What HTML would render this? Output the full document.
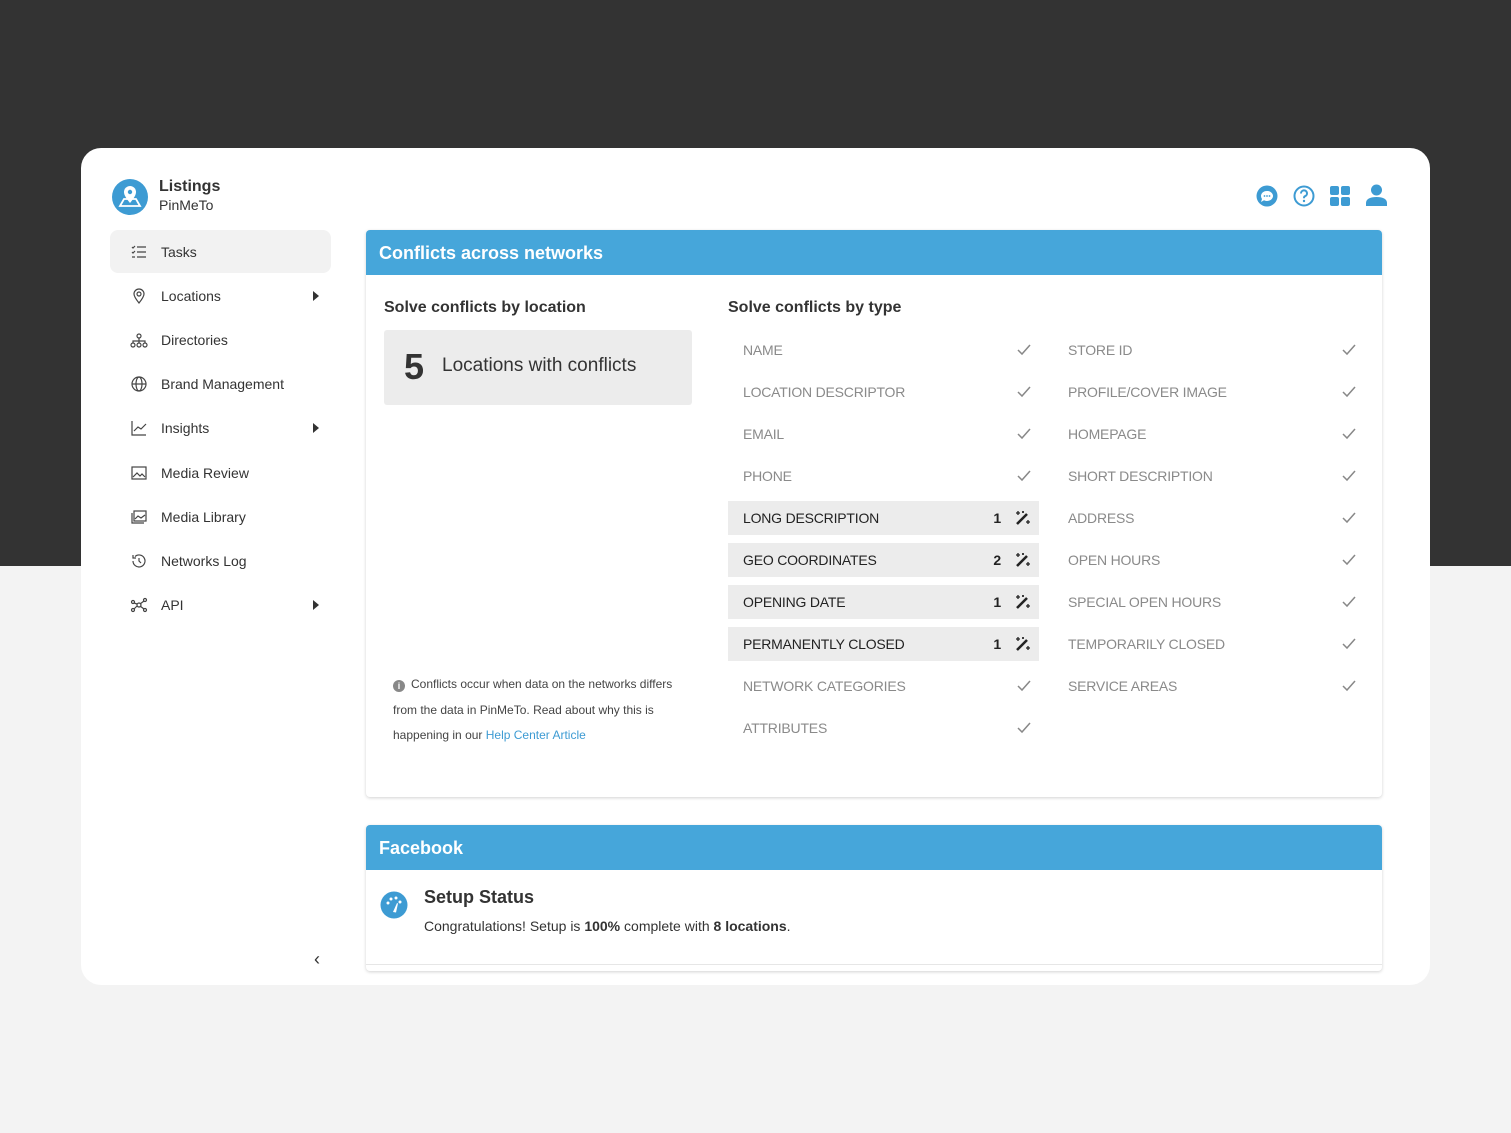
<!DOCTYPE html>
<html><head><meta charset="utf-8"><style>
*{box-sizing:border-box;margin:0;padding:0}
body{width:1511px;height:1133px;position:relative;background:#f3f3f3;font-family:"Liberation Sans",sans-serif;color:#333;overflow:hidden}
.top{position:absolute;left:0;top:0;width:1511px;height:566px;background:#333}
.card{position:absolute;left:81px;top:148px;width:1349px;height:837px;background:#fff;border-radius:20px;overflow:hidden}
.abs{position:absolute}
.nav{position:absolute;left:29px;width:221px;height:43px;border-radius:8px;font-size:14px;color:#333;display:flex;align-items:center}
.nav .ic{position:absolute;left:20px;top:13px;width:18px;height:18px}
.nav .t{position:absolute;left:51px}
.nav .ar{position:absolute;left:203px;top:17px;width:0;height:0;border-left:6px solid #333;border-top:5px solid transparent;border-bottom:5px solid transparent}
.panel{position:absolute;left:285px;width:1016px;background:#fff;box-shadow:0 1px 3px rgba(0,0,0,.18);border-radius:4px;overflow:hidden}
.ph{height:45px;background:#46a6da;color:#fff;font-weight:bold;font-size:18px;padding:13px 13px}
.row{position:absolute;height:34px;font-size:14px;letter-spacing:-0.2px;color:#8a8a8a;display:flex;align-items:center;padding-left:15px}
.row.c{background:#ececec;color:#222}
.chk{position:absolute;right:8px;top:10px}
.num{position:absolute;right:38px;font-weight:bold;color:#222}
</style></head><body>
<div class="top"></div>
<div class="card">
 <svg class="abs" style="left:30px;top:30px" width="38" height="38" viewBox="0 0 38 38"><circle cx="19" cy="19" r="18" fill="#3d9bd3"/><path d="M9 28 L13 21 H25 L29 28 Z" fill="none" stroke="#fff" stroke-width="1.8"/><path d="M19 25 C15 20 13 17 13 14 A6 6 0 0 1 25 14 C25 17 23 20 19 25Z" fill="#fff"/><circle cx="19" cy="14" r="2.2" fill="#3d9bd3"/></svg>
 <div class="abs" style="left:78px;top:30px;font-size:16px;font-weight:bold;color:#333">Listings</div>
 <div class="abs" style="left:78px;top:49px;font-size:14px;color:#333">PinMeTo</div>

 <div class="nav" style="top:82px;background:#f2f2f2"><svg class="ic" viewBox="0 0 18 18" fill="none" stroke="#444" stroke-width="1.2"><path d="M2 4l1 1 2-2M2 9l1 1 2-2M7 4h9M7 9h9M7 14h9M2 14h3"/></svg><span class="t">Tasks</span></div>
 <div class="nav" style="top:126px"><svg class="ic" viewBox="0 0 18 18" fill="none" stroke="#444" stroke-width="1.2"><path d="M9 16C5 11 4 9 4 7a5 5 0 0 1 10 0c0 2-1 4-5 9z"/><circle cx="9" cy="7" r="2"/></svg><span class="t">Locations</span><span class="ar"></span></div>
 <div class="nav" style="top:170px"><svg class="ic" viewBox="0 0 18 18" fill="none" stroke="#444" stroke-width="1.2"><circle cx="9" cy="5" r="2"/><circle cx="3" cy="14" r="2"/><circle cx="9" cy="14" r="2"/><circle cx="15" cy="14" r="2"/><path d="M9 7v5M3 12v-2h12v2"/></svg><span class="t">Directories</span></div>
 <div class="nav" style="top:214px"><svg class="ic" viewBox="0 0 18 18" fill="none" stroke="#444" stroke-width="1.2"><circle cx="9" cy="9" r="7"/><ellipse cx="9" cy="9" rx="3" ry="7"/><path d="M2 9h14"/></svg><span class="t">Brand Management</span></div>
 <div class="nav" style="top:258px"><svg class="ic" viewBox="0 0 18 18" fill="none" stroke="#444" stroke-width="1.2"><path d="M2 2v14h14M4 12l4-4 3 2 5-5"/></svg><span class="t">Insights</span><span class="ar"></span></div>
 <div class="nav" style="top:303px"><svg class="ic" viewBox="0 0 18 18" fill="none" stroke="#444" stroke-width="1.2"><rect x="2" y="3" width="14" height="12"/><path d="M3 13l4-4 3 3 2-2 3 3"/></svg><span class="t">Media Review</span></div>
 <div class="nav" style="top:347px"><svg class="ic" viewBox="0 0 18 18" fill="none" stroke="#444" stroke-width="1.2"><rect x="4" y="3" width="12" height="10"/><path d="M2 5v10h12M5 11l3-3 3 2 4-3"/></svg><span class="t">Media Library</span></div>
 <div class="nav" style="top:391px"><svg class="ic" viewBox="0 0 18 18" fill="none" stroke="#444" stroke-width="1.2"><path d="M3 9a6 6 0 1 0 2-4.5M3 3v3h3M9 6v3l2 2"/></svg><span class="t">Networks Log</span></div>
 <div class="nav" style="top:435px"><svg class="ic" viewBox="0 0 18 18" fill="none" stroke="#444" stroke-width="1.2"><circle cx="9" cy="9" r="2"/><circle cx="3" cy="6" r="1.5"/><circle cx="15" cy="4" r="1.5"/><circle cx="3" cy="14" r="1.5"/><circle cx="15" cy="14" r="1.5"/><path d="M4 7l3 1M14 5l-4 3M4 13l3-3M14 13l-4-3"/></svg><span class="t">API</span><span class="ar"></span></div>
 <div class="abs" style="left:233px;top:801px;font-size:18px;color:#333">‹</div>

 <svg class="abs" style="left:1175px;top:37px" width="22" height="22" viewBox="0 0 22 22"><circle cx="11" cy="11" r="10.5" fill="#3d9bd3"/><path d="M5 11a6 5 0 1 1 3 4.3L5 17l1-3a5 5 0 0 1-1-3z" fill="#fff"/><circle cx="8.5" cy="11" r=".9" fill="#3d9bd3"/><circle cx="11" cy="11" r=".9" fill="#3d9bd3"/><circle cx="13.5" cy="11" r=".9" fill="#3d9bd3"/></svg>
 <svg class="abs" style="left:1212px;top:37px" width="22" height="22" viewBox="0 0 22 22"><circle cx="11" cy="11" r="9.5" fill="none" stroke="#3d9bd3" stroke-width="2"/><path d="M8 8.5a3 3 0 1 1 4 2.7c-1 .4-1 1-1 2" fill="none" stroke="#3d9bd3" stroke-width="2"/><circle cx="11" cy="16" r="1.2" fill="#3d9bd3"/></svg>
 <svg class="abs" style="left:1249px;top:38px" width="20" height="20" viewBox="0 0 20 20" fill="#3d9bd3"><rect x="0" y="0" width="9" height="9" rx="2"/><rect x="11" y="0" width="9" height="9" rx="2"/><rect x="0" y="11" width="9" height="9" rx="2"/><rect x="11" y="11" width="9" height="9" rx="2"/></svg>
 <svg class="abs" style="left:1285px;top:36px" width="21" height="22" viewBox="0 0 21 22" fill="#3d9bd3"><circle cx="10.5" cy="6" r="5.5"/><path d="M0 22v-3c0-4 4-6 10.5-6S21 15 21 19v3z"/></svg>

 <div class="panel" style="top:82px;height:567px">
  <div class="ph">Conflicts across networks</div>
  <div class="abs" style="left:18px;top:69px;font-size:16px;font-weight:bold;color:#333">Solve conflicts by location</div>
  <div class="abs" style="left:18px;top:100px;width:308px;height:75px;background:#ececec;border-radius:3px"><span class="abs" style="left:20px;top:16px;font-size:36px;font-weight:bold;color:#333">5</span><span class="abs" style="left:58px;top:25px;font-size:19px;color:#333">Locations with conflicts</span></div>
  <div class="abs" style="left:27px;top:442px;width:285px;font-size:12px;line-height:25.5px;color:#444"><span style="display:inline-block;width:12px;height:12px;border-radius:50%;background:#888;color:#fff;font-size:9px;text-align:center;line-height:12px;font-weight:bold;vertical-align:-1px;margin-right:6px">i</span>Conflicts occur when data on the networks differs from the data in PinMeTo. Read about why this is happening in our <span style="color:#3d9bd3">Help Center Article</span></div>
  <div class="abs" style="left:362px;top:69px;font-size:16px;font-weight:bold;color:#333">Solve conflicts by type</div>
  <div id="rows"></div>
 </div>

 <div class="panel" style="top:677px;height:146px">
  <div class="ph">Facebook</div>
  <svg class="abs" style="left:14px;top:66px" width="28" height="28" viewBox="0 0 28 28"><circle cx="14" cy="14" r="13.5" fill="#3d9bd3"/><circle cx="8" cy="12" r="1.5" fill="#fff"/><circle cx="11" cy="8" r="1.5" fill="#fff"/><circle cx="16" cy="7" r="1.5" fill="#fff"/><circle cx="20" cy="11" r="1.5" fill="#fff"/><path d="M13 21l4-9 1 .5-2 9z" fill="#fff"/></svg>
  <div class="abs" style="left:58px;top:62px;font-size:18px;font-weight:bold;color:#333">Setup Status</div>
  <div class="abs" style="left:58px;top:93px;font-size:14px;color:#333">Congratulations! Setup is <b>100%</b> complete with <b>8 locations</b>.</div>
  <div class="abs" style="left:0;top:139px;width:1016px;height:1px;background:#e6e6e6"></div>
 </div>
</div>
<script>
var chk='<svg class="chk" width="14" height="14" viewBox="0 0 14 14"><path d="M1 7l4 4 8-9" fill="none" stroke="#888" stroke-width="1.5"/></svg>';
var wand='<svg class="chk" width="16" height="16" viewBox="0 0 16 16" style="top:9px"><path d="M2 14L12 4" stroke="#222" stroke-width="2.6"/><path d="M3 1v4M1 3h4M13 10v4M11 12h4M8 1v2M7 2h2" stroke="#222" stroke-width="1.3"/></svg>';
var c1=[["NAME"],["LOCATION DESCRIPTOR"],["EMAIL"],["PHONE"],["LONG DESCRIPTION",1],["GEO COORDINATES",2],["OPENING DATE",1],["PERMANENTLY CLOSED",1],["NETWORK CATEGORIES"],["ATTRIBUTES"]];
var c2=["STORE ID","PROFILE/COVER IMAGE","HOMEPAGE","SHORT DESCRIPTION","ADDRESS","OPEN HOURS","SPECIAL OPEN HOURS","TEMPORARILY CLOSED","SERVICE AREAS"];
var h='';
c1.forEach(function(r,i){var t=103+i*42;
 if(r[1])h+='<div class="row c" style="left:362px;top:'+t+'px;width:311px">'+r[0]+'<span class="num">'+r[1]+'</span>'+wand+'</div>';
 else h+='<div class="row" style="left:362px;top:'+t+'px;width:311px">'+r[0]+chk+'</div>';});
c2.forEach(function(r,i){var t=103+i*42;h+='<div class="row" style="left:687px;top:'+t+'px;width:311px">'+r+chk+'</div>';});
document.getElementById('rows').outerHTML=h;
</script>
</body></html>
